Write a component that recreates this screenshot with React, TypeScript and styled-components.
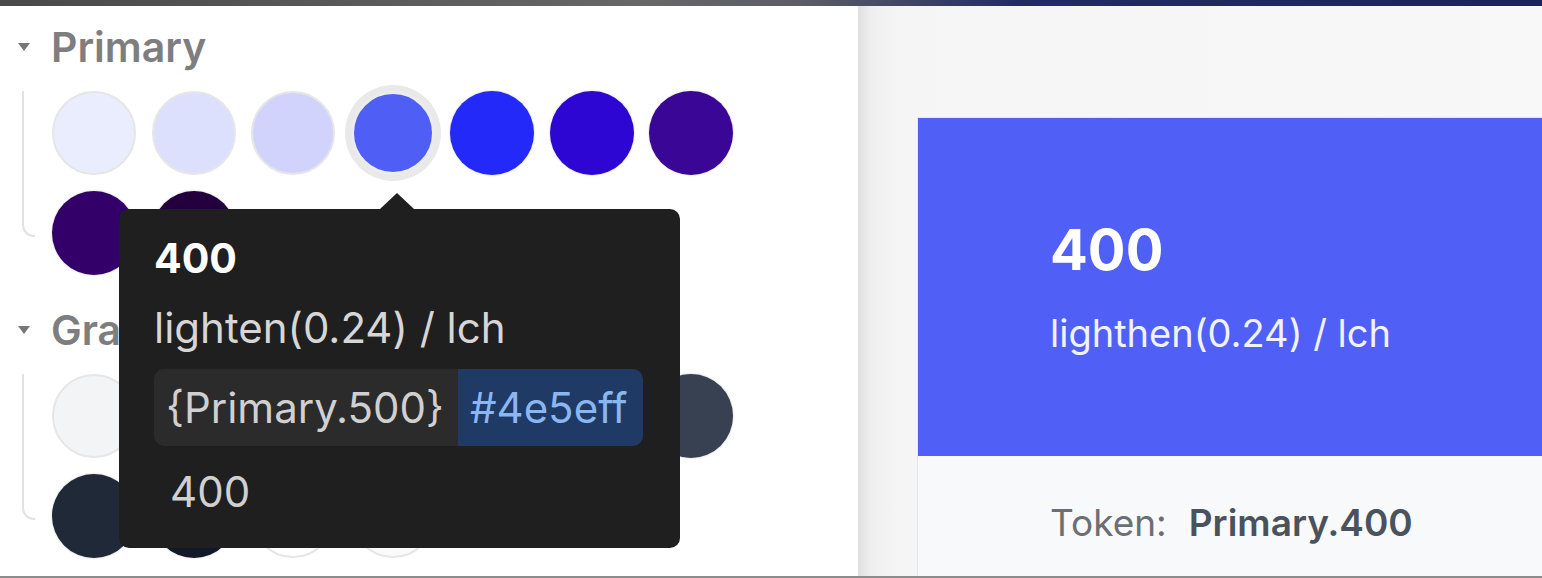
import React from 'react'
import styled, { createGlobalStyle, css } from 'styled-components'

const GlobalStyle = createGlobalStyle`
  html,
  body {
    margin: 0;
    padding: 0;
    background: #ffffff;
    overflow: hidden;
  }

  body {
    font-family: Inter, 'Noto Sans', sans-serif;
  }

  * {
    box-sizing: border-box;
  }
`

const Frame = styled.div`
  display: flex;
  flex-direction: column;
  width: 1542px;
  height: 578px;
  overflow: hidden;
`

const TopBar = styled.div`
  flex: none;
  height: 6px;
  background: linear-gradient(
    to right,
    #494949 0%,
    #676767 42%,
    #5c5d66 52%,
    #222c62 66%,
    #1c2559 100%
  );
`

const Workspace = styled.div`
  display: flex;
  flex: 1;
  min-height: 0;
`

const BottomEdge = styled.div`
  flex: none;
  height: 2px;
  background: #8c8c8c;
`

const LeftPanel = styled.div`
  position: relative;
  flex: none;
  width: 858px;
  padding: 13px 0 0 18px;
  background: #ffffff;
`

const Section = styled.section`
  display: flex;
  flex-direction: column;

  & + & {
    margin-top: 27px;
  }
`

const Heading = styled.div`
  display: flex;
  align-items: center;
  gap: 21px;
  height: 56px;
  font-size: 41px;
  font-weight: 600;
  color: #7e7e7e;
`

const Caret = styled.span`
  width: 0;
  height: 0;
  border-left: 6.5px solid transparent;
  border-right: 6.5px solid transparent;
  border-top: 8px solid #767676;
`

const Group = styled.div`
  display: flex;
  margin-top: 16px;
`

const Guide = styled.div`
  flex: none;
  width: 13px;
  height: 146px;
  margin-left: 4px;
  border-left: 2px solid #e2e2e2;
  border-bottom: 2px solid #e2e2e2;
  border-bottom-left-radius: 12px;
`

const Swatches = styled.div`
  display: grid;
  grid-template-columns: repeat(7, 84px);
  column-gap: 15.5px;
  row-gap: 16px;
  margin-left: 17px;
`

const Swatch = styled.div<{ $color: string; $light?: boolean; $selected?: boolean }>`
  width: 84px;
  height: 84px;
  border-radius: 50%;
  background: ${({ $color }) => $color};
  box-shadow: 0 0 2px rgba(0, 0, 0, 0.28);

  ${({ $light }) =>
    $light &&
    css`
      border: 2px solid #e6e6e6;
      box-shadow: none;
    `}

  ${({ $selected }) =>
    $selected &&
    css`
      border: 3px solid #ececec;
      box-shadow: 0 0 0 6px #e9e9e9;
    `}
`

const Tooltip = styled.div`
  position: absolute;
  left: 119px;
  top: 203px;
  width: 561px;
  height: 339px;
  padding: 25px 35px 0;
  border-radius: 10px;
  background: #1f1f1f;
  color: #ffffff;

  &::before {
    content: '';
    position: absolute;
    top: -16px;
    left: 261px;
    border-left: 17.5px solid transparent;
    border-right: 17.5px solid transparent;
    border-bottom: 16px solid #1f1f1f;
  }
`

const TipTitle = styled.div`
  font-size: 41px;
  line-height: 48px;
  font-weight: 700;
`

const TipFormula = styled.div`
  margin-top: 21px;
  font-size: 42px;
  line-height: 50px;
  color: #d6d6d6;
`

const TipRef = styled.div`
  display: flex;
  width: fit-content;
  height: 77px;
  margin-top: 16px;
  border-radius: 10px;
  overflow: hidden;
  font-size: 42px;
`

const RefPart = styled.span<{ $value?: boolean }>`
  display: flex;
  align-items: center;
  padding: 0 ${({ $value }) => ($value ? '15px' : '14px')} 0 12px;
  background: ${({ $value }) => ($value ? '#1f3a64' : '#2b2b2b')};
  color: ${({ $value }) => ($value ? '#8ab6f2' : '#d0d0d0')};
`

const TipShade = styled.div`
  margin-top: 21px;
  padding-left: 16px;
  font-size: 42px;
  line-height: 50px;
  color: #d0d0d0;
`

const RightPanel = styled.div`
  flex: 1;
  min-width: 0;
  padding: 111px 0 0 59px;
  overflow: hidden;
  background: linear-gradient(to right, #e0e0e0 0px, #efefef 14px, #f5f5f5 40px, #f8f8f8 100%);
`

const PreviewCard = styled.div`
  width: 700px;
  border: 1px solid #e4e6ec;
  border-right: none;
`

const ColorBlock = styled.div<{ $color: string }>`
  height: 338px;
  padding: 100px 0 0 132px;
  background: ${({ $color }) => $color};
  color: #ffffff;
`

const BlockTitle = styled.div`
  font-size: 56px;
  line-height: 64px;
  font-weight: 700;
`

const BlockFormula = styled.div`
  margin-top: 29px;
  font-size: 38px;
  line-height: 44px;
  color: #f1f2ff;
`

const CardFooter = styled.div`
  height: 200px;
  padding: 45px 0 0 132px;
  background: #f8f9fa;
  font-size: 37px;
  line-height: 44px;
`

const TokenLabel = styled.span`
  margin-right: 22px;
  color: #6b6e73;
`

const TokenValue = styled.span`
  font-weight: 600;
  color: #4a525e;
`

type Shade = { color: string; light?: boolean; selected?: boolean }

const primary: Shade[] = [
  { color: '#eaedfe', light: true },
  { color: '#dde0fd', light: true },
  { color: '#d1d3fc', light: true },
  { color: '#4f5ff6', selected: true },
  { color: '#2329f8' },
  { color: '#2d06d4' },
  { color: '#3a0696' },
  { color: '#33006a' },
  { color: '#23003d' },
]

const gray: Shade[] = [
  { color: '#f3f4f6', light: true },
  { color: '#e5e7eb', light: true },
  { color: '#d1d5db', light: true },
  { color: '#9ca3af' },
  { color: '#6b7280' },
  { color: '#4b5563' },
  { color: '#374151' },
  { color: '#1f2937' },
  { color: '#111827' },
  { color: '#ffffff', light: true },
  { color: '#fafafa', light: true },
]

type PaletteProps = {
  name: string
  shades: Shade[]
}

function Palette({ name, shades }: PaletteProps): JSX.Element {
  return (
    <Section>
      <Heading>
        <Caret />
        {name}
      </Heading>
      <Group>
        <Guide />
        <Swatches>
          {shades.map((shade, index) => (
            <Swatch
              key={index}
              $color={shade.color}
              $light={shade.light}
              $selected={shade.selected}
            />
          ))}
        </Swatches>
      </Group>
    </Section>
  )
}

export default function App(): JSX.Element {
  return (
    <Frame>
      <GlobalStyle />
      <TopBar />
      <Workspace>
        <LeftPanel>
          <Palette name="Primary" shades={primary} />
          <Palette name="Gray" shades={gray} />

          <Tooltip>
            <TipTitle>400</TipTitle>
            <TipFormula>lighten(0.24) / lch</TipFormula>
            <TipRef>
              <RefPart>{'{Primary.500}'}</RefPart>
              <RefPart $value>#4e5eff</RefPart>
            </TipRef>
            <TipShade>400</TipShade>
          </Tooltip>
        </LeftPanel>

        <RightPanel>
          <PreviewCard>
            <ColorBlock $color="#5060f6">
              <BlockTitle>400</BlockTitle>
              <BlockFormula>lighthen(0.24) / lch</BlockFormula>
            </ColorBlock>
            <CardFooter>
              <TokenLabel>Token:</TokenLabel>
              <TokenValue>Primary.400</TokenValue>
            </CardFooter>
          </PreviewCard>
        </RightPanel>
      </Workspace>
      <BottomEdge />
    </Frame>
  )
}
